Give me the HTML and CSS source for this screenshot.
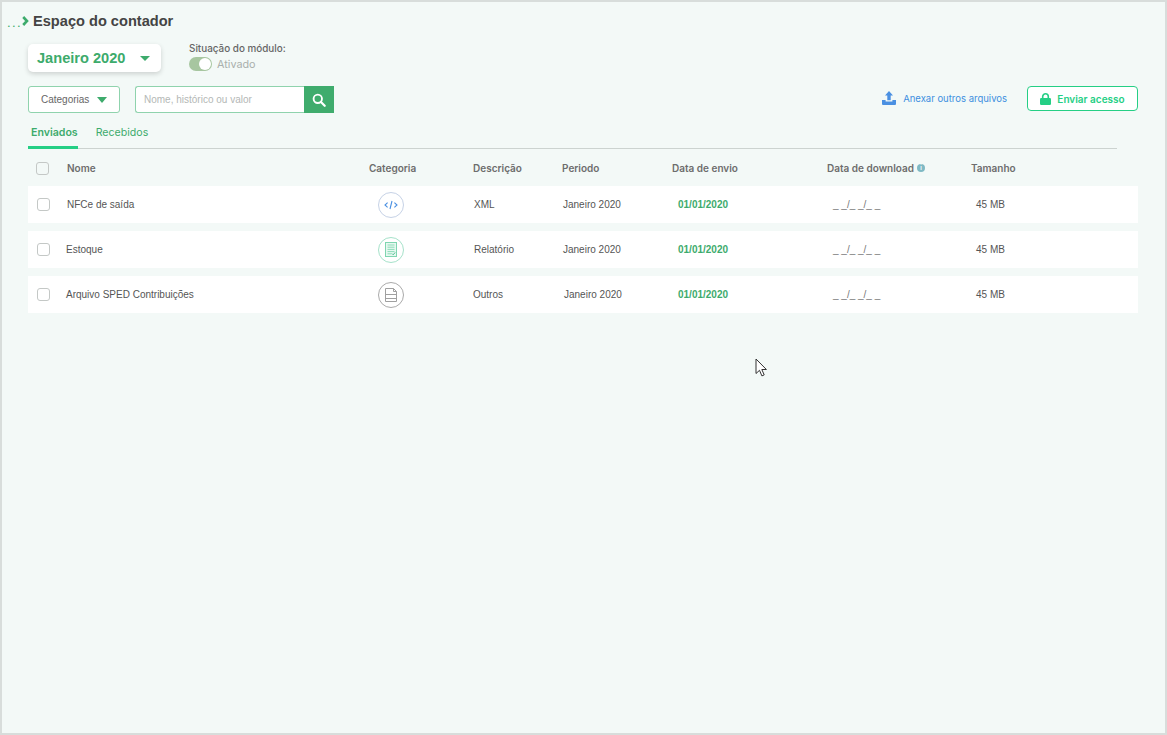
FILE: index.html
```html
<!DOCTYPE html>
<html lang="pt-BR">
<head>
    <meta charset="UTF-8">
    <meta name="viewport" content="width=device-width, initial-scale=1.0">
    <title>Espaço do contador</title>
    <link rel="stylesheet" href="styles.css">
</head>
<body>
    <div class="page">
        <div class="breadcrumb">
            <span class="dots">...</span>
            <svg class="chevron" width="7" height="10" viewBox="0 0 7 10"><path d="M1.2 1l3.8 4-3.8 4" fill="none" stroke="#3dab6c" stroke-width="2.6"/></svg>
            <h1>Espaço do contador</h1>
        </div>

        <div class="module-row">
            <button class="month-card">Janeiro 2020 <span class="caret caret-big"></span></button>
            <div class="module-status">
                <p class="status-label">Situação do módulo:</p>
                <div class="status-toggle">
                    <span class="toggle"><span class="knob"></span></span>
                    <span class="status-text">Ativado</span>
                </div>
            </div>
        </div>

        <div class="toolbar">
            <button class="filter-button">Categorias <span class="caret"></span></button>
            <div class="search">
                <input type="text" placeholder="Nome, histórico ou valor">
                <button class="search-button" aria-label="Buscar">
                    <svg width="14" height="14" viewBox="0 0 15 15"><circle cx="6.2" cy="6.2" r="4.5" fill="none" stroke="#fff" stroke-width="2"/><path d="M9.6 9.6l4 4" stroke="#fff" stroke-width="2.4" stroke-linecap="round"/></svg>
                </button>
            </div>
            <a href="#" class="attach-link">
                <svg width="14" height="14" viewBox="0 0 14 14"><path d="M7 0l4 4.4H8.7v4.8H5.3V4.4H3z" fill="#4a90e2"/><path d="M0 9h3.6v1.4h6.8V9H14v4a1 1 0 0 1-1 1H1a1 1 0 0 1-1-1z" fill="#4a90e2"/></svg>
                Anexar outros arquivos
            </a>
            <button class="access-button">
                <svg width="11" height="12" viewBox="0 0 11 12"><path d="M2.7 5.5V3.6a2.8 2.8 0 0 1 5.6 0v1.9" fill="none" stroke="#25cf85" stroke-width="1.6"/><rect y="5" width="11" height="7" rx="1.2" fill="#25cf85"/></svg>
                Enviar acesso
            </button>
        </div>

        <div class="tabs">
            <a href="#" class="tab active">Enviados</a>
            <a href="#" class="tab">Recebidos</a>
        </div>

        <div class="table-head grid">
            <span class="checkbox head-check"></span>
            <span class="col-name">Nome</span>
            <span>Categoria</span>
            <span>Descrição</span>
            <span class="col-period">Periodo</span>
            <span>Data de envio</span>
            <span class="col-download">Data de download <i class="info">i</i></span>
            <span>Tamanho</span>
        </div>

        <div class="rows">
            <div class="row grid">
                <span class="checkbox"></span>
                <span class="name name-first">NFCe de saída</span>
                <span class="cat-icon cat-xml">
                    <svg width="14" height="10" viewBox="0 0 14 10"><path d="M3.6 2.6L1 5l2.6 2.4M10.4 2.6L13 5l-2.6 2.4M8 1L6 9" fill="none" stroke="#4a90e2" stroke-width="1.1"/></svg>
                </span>
                <span class="desc">XML</span>
                <span>Janeiro 2020</span>
                <span class="sent">01/01/2020</span>
                <span class="download">_ _/_ _/_ _</span>
                <span class="size">45 MB</span>
            </div>
            <div class="row grid">
                <span class="checkbox"></span>
                <span class="name">Estoque</span>
                <span class="cat-icon cat-report">
                    <svg width="12" height="15" viewBox="0 0 12 15"><rect x=".5" y=".5" width="11" height="14" fill="#e6f8f0" stroke="#7fd5b0"/><path d="M2.5 3h7M2.5 5.2h7M2.5 7.4h7M2.5 9.6h7M2.5 11.8h4" stroke="#8ddcb9"/><path d="M7 11.6l1.2 1.2 2-2.4" fill="none" stroke="#4fbf92"/></svg>
                </span>
                <span class="desc">Relatório</span>
                <span>Janeiro 2020</span>
                <span class="sent">01/01/2020</span>
                <span class="download">_ _/_ _/_ _</span>
                <span class="size">45 MB</span>
            </div>
            <div class="row grid">
                <span class="checkbox"></span>
                <span class="name">Arquivo SPED Contribuições</span>
                <span class="cat-icon cat-other">
                    <svg width="12" height="14" viewBox="0 0 12 14"><path d="M.5.5h8l3 3v10H.5zM8.5.5v3h3M.5 6.5h11M.5 10.5h11" fill="none" stroke="#a0a0a0"/></svg>
                </span>
                <span class="desc desc-last">Outros</span>
                <span class="period-last">Janeiro 2020</span>
                <span class="sent">01/01/2020</span>
                <span class="download">_ _/_ _/_ _</span>
                <span class="size">45 MB</span>
            </div>
        </div>

        <svg class="cursor" width="13" height="20" viewBox="0 0 13 20"><path d="M1 1v14.5l3.5-3.2 2.4 5.6 2.3-1-2.4-5.4h4.6z" fill="#fff" stroke="#333" stroke-width="1"/></svg>
    </div>
</body>
</html>
```

FILE: styles.css
```css
* {
    margin: 0;
    padding: 0;
    box-sizing: border-box;
}

body {
    font-family: "Liberation Sans", Arial, sans-serif;
    background: #f3f9f7;
    color: #555;
}

.page {
    position: relative;
    height: 735px;
    border: 2px solid #d8dddb;
    padding: 0 27px 0 26px;
}

.breadcrumb {
    display: flex;
    align-items: center;
    height: 38px;
    margin-left: -21px;
}

.dots {
    color: #3dab6c;
    font-size: 13px;
    letter-spacing: 1.4px;
    width: 15px;
    margin-top: 2px;
}

.chevron {
    margin-right: 4px;
}

h1 {
    font-size: 14.6px;
    font-weight: bold;
    color: #444;
}

.module-row {
    display: flex;
    margin-top: 4px;
}

.month-card {
    display: flex;
    align-items: center;
    justify-content: space-between;
    width: 133px;
    height: 28px;
    padding: 0 11px 0 9px;
    border: none;
    border-radius: 5px;
    background: #fff;
    box-shadow: 0 2px 5px rgba(0, 0, 0, 0.16);
    color: #3dab6c;
    font-family: inherit;
    font-size: 14.6px;
    font-weight: bold;
}

.caret {
    display: inline-block;
    border-left: 5px solid transparent;
    border-right: 5px solid transparent;
    border-top: 6px solid #3dab6c;
}

.caret-big {
    border-top-width: 5px;
}

.module-status {
    margin-left: 28px;
    margin-top: -2px;
}

.status-label {
    font-family: Inter, sans-serif;
    font-size: 9.9px;
    font-weight: 500;
    color: #666;
    line-height: 12px;
}

.status-toggle {
    display: flex;
    align-items: center;
    margin-top: 3px;
}

.toggle {
    display: flex;
    justify-content: flex-end;
    align-items: center;
    width: 23px;
    height: 14px;
    border-radius: 7px;
    background: #a7c6a0;
    padding-right: 1px;
}

.knob {
    width: 12px;
    height: 12px;
    border-radius: 50%;
    background: #fff;
}

.status-text {
    margin-left: 5px;
    font-family: Inter, sans-serif;
    font-size: 10.8px;
    color: #a9b0ac;
}

.toolbar {
    display: flex;
    align-items: flex-start;
    margin-top: 14px;
}

.filter-button {
    display: flex;
    align-items: center;
    justify-content: space-between;
    width: 92px;
    height: 27px;
    padding: 0 12px;
    background: #fff;
    border: 1px solid #8fd3ad;
    border-radius: 3px;
    color: #666;
    font-family: inherit;
    font-size: 10px;
}

.search {
    display: flex;
    height: 27px;
    margin-left: 15px;
}

.search input {
    width: 169px;
    padding-left: 8px;
    background: #fff;
    border: 1px solid #8fd3ad;
    border-right: none;
    border-radius: 3px 0 0 3px;
    font-family: inherit;
    font-size: 10px;
}

.search input::placeholder {
    color: #b4b8b6;
}

.search-button {
    display: flex;
    align-items: center;
    justify-content: center;
    width: 30px;
    background: #3fac6d;
    border: none;
}

.attach-link {
    display: flex;
    align-items: center;
    gap: 7px;
    margin-left: auto;
    margin-top: 5px;
    color: #3d8fe0;
    font-family: Inter, sans-serif;
    font-size: 9.5px;
    text-decoration: none;
}

.access-button {
    display: flex;
    align-items: center;
    justify-content: center;
    gap: 6px;
    width: 111px;
    height: 25px;
    margin-left: 20px;
    background: #fff;
    border: 1px solid #25cf85;
    border-radius: 4px;
    color: #25cf85;
    font-family: Inter, sans-serif;
    font-size: 10px;
    font-weight: 600;
}

.tabs {
    display: flex;
    gap: 18px;
    height: 36px;
    margin-right: 21px;
    border-bottom: 1px solid #ccd3d0;
}

.tab {
    height: 35px;
    padding: 13px 0 0;
    color: #3dab6c;
    font-family: Inter, sans-serif;
    font-size: 10.6px;
    text-decoration: none;
}

.tab.active {
    height: 36px;
    padding-left: 3px;
    border-bottom: 3px solid #25cf85;
    font-weight: 600;
}

.grid {
    display: grid;
    grid-template-columns: 38px 303px 104px 90px 109px 155px 144px 1fr;
    align-items: center;
}

.table-head {
    height: 37px;
    padding-top: 1px;
    font-family: Inter, sans-serif;
    font-size: 10px;
    font-weight: 600;
    color: #6d6d6d;
}

.col-name {
    padding-left: 1px;
}

.col-period {
    margin-left: -1px;
}

.col-download {
    display: flex;
    align-items: center;
    gap: 3px;
}

.info {
    display: inline-block;
    width: 8px;
    height: 8px;
    border-radius: 50%;
    background: #7fb9c4;
    color: #fff;
    font-size: 6px;
    font-style: normal;
    line-height: 8px;
    text-align: center;
}

.rows {
    display: flex;
    flex-direction: column;
    gap: 8px;
}

.row {
    height: 37px;
    background: #fff;
    font-size: 10px;
    color: #555;
}

.checkbox {
    display: block;
    width: 13px;
    height: 13px;
    margin-left: 9px;
    background: #fff;
    border: 1px solid #c4c8c6;
    border-radius: 3px;
}

.checkbox.head-check {
    margin-left: 8px;
    background: transparent;
}

.name-first {
    padding-left: 1px;
}

.cat-icon {
    display: flex;
    align-items: center;
    justify-content: center;
    width: 26px;
    height: 26px;
    margin-left: 9px;
    border: 1px solid;
    border-radius: 50%;
}

.cat-xml {
    border-color: #c6d2e6;
}

.cat-report {
    border-color: #a6e2ca;
}

.cat-other {
    border-color: #aaa;
}

.desc {
    padding-left: 1px;
}

.desc-last {
    padding-left: 0;
}

.period-last {
    padding-left: 1px;
}

.sent {
    padding-left: 6px;
    color: #3dab6c;
    font-weight: bold;
}

.download {
    padding-left: 6px;
    color: #777;
}

.size {
    padding-left: 5px;
}

.cursor {
    position: absolute;
    left: 753px;
    top: 356px;
}
```
